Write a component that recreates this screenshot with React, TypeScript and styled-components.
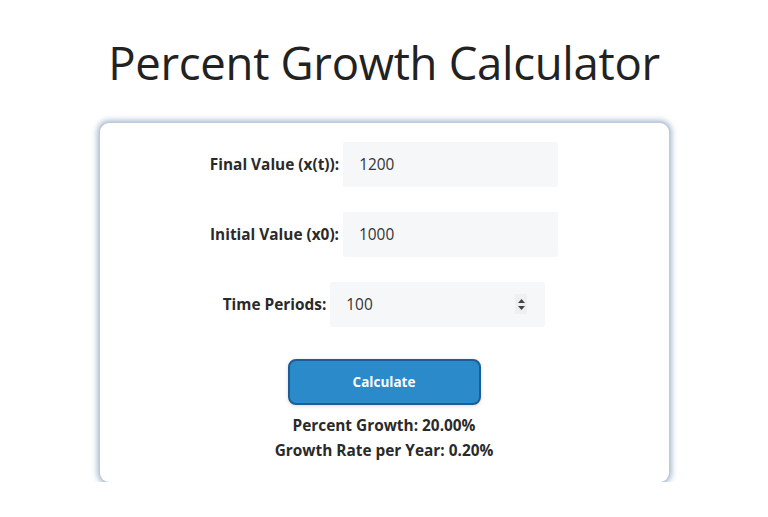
import React, { useState } from "react";
import styled, { createGlobalStyle } from "styled-components";

const Global = createGlobalStyle`
  html, body { margin: 0; padding: 0; background: #ffffff; }
  body { font-family: "Open Sans", "Noto Sans", sans-serif; color: #222; }
  * { box-sizing: border-box; }
`;

const Page = styled.div`
  width: 768px;
  display: flex;
  flex-direction: column;
  align-items: center;
  padding-top: 32px;
`;

const Title = styled.h1`
  margin: 0 0 31px 0;
  font-family: "Open Sans", "Noto Sans", sans-serif;
  font-weight: 400;
  font-size: 45.5px;
  line-height: 60px;
  color: #222;
  letter-spacing: -0.3px;
`;

const Card = styled.div`
  width: 569px;
  height: 359px;
  background: #fff;
  border-radius: 9px;
  box-shadow: 0 0 0 1px #bccadb, 0 0 6px 2px rgba(80, 115, 160, 0.6);
  display: flex;
  flex-direction: column;
  align-items: center;
  padding-top: 19px;
`;

const Row = styled.div`
  display: flex;
  align-items: center;
  gap: 4px;
  margin-bottom: 25px;
`;

const Label = styled.label`
  font-family: "Open Sans", "Noto Sans", sans-serif;
  font-weight: 700;
  font-size: 15.4px;
  color: #2a2a2a;
`;

const Input = styled.input`
  width: 215px;
  height: 45px;
  border: none;
  outline: none;
  background: #f6f7f9;
  padding: 0 0 0 16px;
  font-family: "Open Sans", "Noto Sans", sans-serif;
  font-size: 15.4px;
  color: #333;
  border-radius: 2px;
`;

const NumberWrap = styled.div`
  position: relative;
  display: flex;
`;

const Spinner = styled.div`
  position: absolute;
  right: 18px;
  top: 12px;
  width: 12px;
  height: 20px;
  background: #eeeff1;
  display: flex;
  flex-direction: column;
  align-items: center;
  justify-content: center;
  gap: 3px;
`;

const Button = styled.button`
  margin-top: 7px;
  width: 193px;
  height: 46px;
  background: #2b8bca;
  border: 2px solid #1d5d93;
  border-radius: 8px;
  color: #fff;
  font-family: "Open Sans", "Noto Sans", sans-serif;
  font-weight: 700;
  font-size: 13.5px;
  box-shadow: 0 1px 4px rgba(0, 0, 0, 0.15);
  cursor: pointer;
`;

const Results = styled.div`
  margin-top: 8px;
  display: flex;
  flex-direction: column;
  align-items: center;
`;

const ResultLine = styled.div`
  font-family: "Open Sans", "Noto Sans", sans-serif;
  font-weight: 700;
  font-size: 15.4px;
  line-height: 25px;
  color: #2a2a2a;
`;

export default function App() {
  const [fv, setFv] = useState("1200");
  const [iv, setIv] = useState("1000");
  const [tp, setTp] = useState("100");
  return (
    <>
      <Global />
      <Page>
        <Title>Percent Growth Calculator</Title>
        <Card>
          <Row>
            <Label>Final Value (x(t)):</Label>
            <Input value={fv} onChange={(e) => setFv(e.target.value)} />
          </Row>
          <Row>
            <Label>Initial Value (x0):</Label>
            <Input value={iv} onChange={(e) => setIv(e.target.value)} />
          </Row>
          <Row>
            <Label>Time Periods:</Label>
            <NumberWrap>
              <Input value={tp} onChange={(e) => setTp(e.target.value)} />
              <Spinner>
                <svg width="7" height="4" viewBox="0 0 7 4"><path d="M0 4 L3.5 0 L7 4Z" fill="#444" /></svg>
                <svg width="7" height="4" viewBox="0 0 7 4"><path d="M0 0 L3.5 4 L7 0Z" fill="#444" /></svg>
              </Spinner>
            </NumberWrap>
          </Row>
          <Button>Calculate</Button>
          <Results>
            <ResultLine>Percent Growth: 20.00%</ResultLine>
            <ResultLine>Growth Rate per Year: 0.20%</ResultLine>
          </Results>
        </Card>
      </Page>
    </>
  );
}
